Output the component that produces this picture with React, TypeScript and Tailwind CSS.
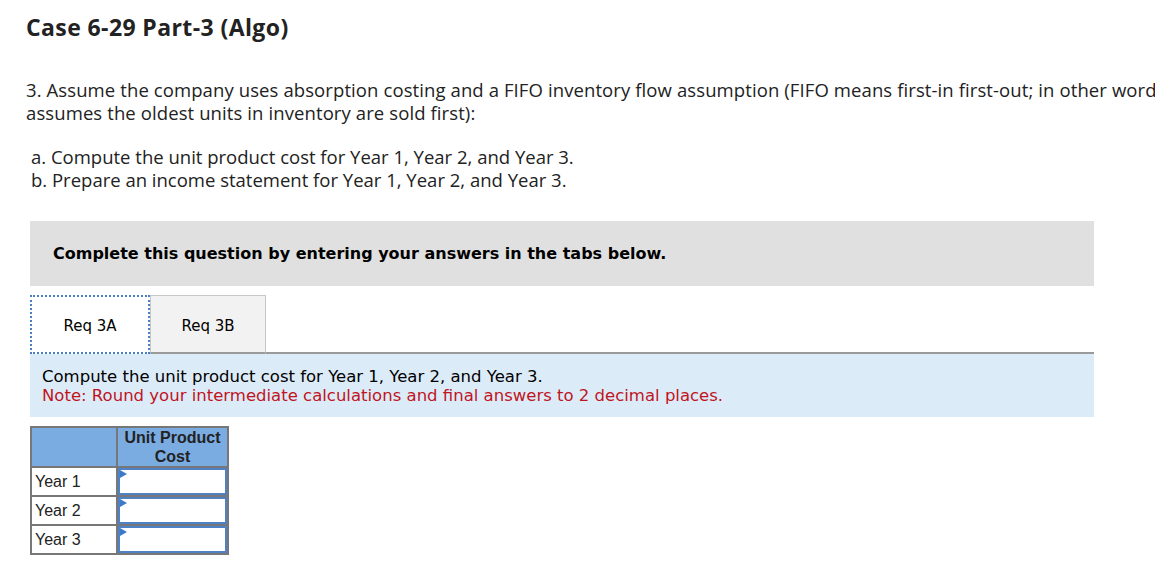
import React from "react";

const years = ["Year 1", "Year 2", "Year 3"];

function AnswerCell() {
  return (
    <div className="relative h-[27px] w-full border-2 border-[#4f81c7] bg-white">
      <span className="absolute left-0 top-0 h-0 w-0 border-y-[4px] border-l-[7px] border-y-transparent border-l-[#3d79c9]" />
    </div>
  );
}

export default function App() {
  return (
    <div className="h-[561px] w-[1155px] overflow-hidden bg-white text-[#222]">
      <div className="w-[1210px] pl-[26px] pt-[13px]">
        <h1 className="font-['Open_Sans',sans-serif] text-[23px] font-bold leading-[28px] tracking-[0.4px] text-[#222]">
          Case 6-29 Part-3 (Algo)
        </h1>

        <p className="mt-[37px] font-['Open_Sans',sans-serif] text-[18.5px] leading-[23px] tracking-[0.1px] text-[#222]">
          3. Assume the company uses absorption costing and a FIFO inventory flow assumption (FIFO means first-in first-out; in other words, it
          assumes the oldest units in inventory are sold first):
        </p>

        <div className="mt-[21px] pl-[5px] font-['Open_Sans',sans-serif] text-[18.5px] leading-[23px] text-[#222]">
          <p>a. Compute the unit product cost for Year 1, Year 2, and Year 3.</p>
          <p>b. Prepare an income statement for Year 1, Year 2, and Year 3.</p>
        </div>
      </div>

      <div className="ml-[30px] mt-[30px] w-[1064px]">
        <div className="flex h-[65px] items-center bg-[#e0e0e0] px-[23px] font-['DejaVu_Sans',sans-serif] text-[16px] font-bold text-black">
          Complete this question by entering your answers in the tabs below.
        </div>

        <div className="mt-[9px] flex items-end font-['DejaVu_Sans',sans-serif] text-[15px] text-black">
          <div className="flex h-[59px] w-[120px] items-center justify-center bg-white pt-[4px] outline-2 -outline-offset-2 outline-dotted outline-[#4a7ec2]">
            Req 3A
          </div>
          <div className="flex h-[59px] w-[116px] items-center justify-center border border-b-2 border-[#c8c8c8] border-b-[#9a9a9a] bg-[#f2f2f2] pt-[4px]">
            Req 3B
          </div>
          <div className="h-[2px] flex-1 bg-[#9a9a9a]" />
        </div>

        <div className="h-[63px] bg-[#dcebf8] px-[12px] pt-[13px] font-['DejaVu_Sans',sans-serif] text-[16.5px] leading-[19px]">
          <p className="text-black">Compute the unit product cost for Year 1, Year 2, and Year 3.</p>
          <p className="text-[#c0141e]">Note: Round your intermediate calculations and final answers to 2 decimal places.</p>
        </div>

        <table className="mt-[9px] border-collapse font-['Liberation_Sans',sans-serif] text-[16px]">
          <thead>
            <tr className="bg-[#7aace2]">
              <th className="h-[40px] w-[86px] border-2 border-[#777] p-0" />
              <th className="w-[111px] border-2 border-[#777] p-0 text-center text-[16px] font-bold leading-[19px] text-[#222]">
                Unit Product
                <br />
                Cost
              </th>
            </tr>
          </thead>
          <tbody>
            {years.map((y) => (
              <tr key={y}>
                <td className="border-2 border-[#777] px-[3px] py-0 text-[#222]">{y}</td>
                <td className="border-2 border-[#777] p-0">
                  <AnswerCell />
                </td>
              </tr>
            ))}
          </tbody>
        </table>
      </div>
    </div>
  );
}
